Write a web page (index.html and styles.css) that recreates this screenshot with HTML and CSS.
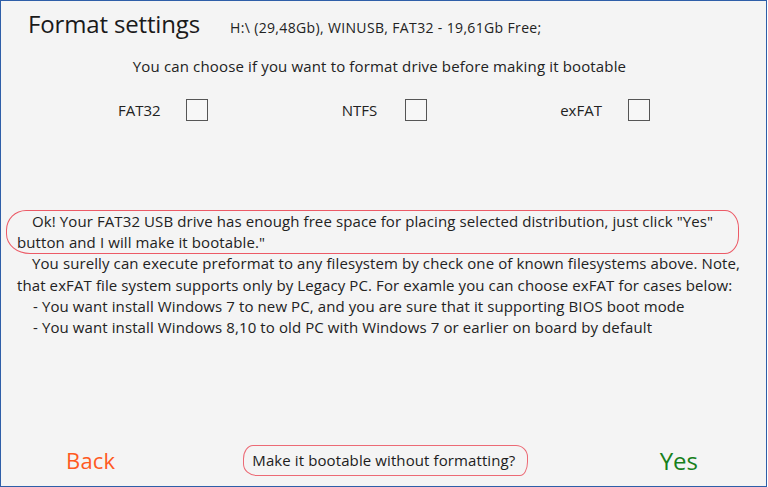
FILE: index.html
```html
<!DOCTYPE html>
<html>
<head>
<meta charset="utf-8">
<link rel="stylesheet" href="styles.css">
</head>
<body>
<div class="frame">
  <div class="header">
    <h1 class="title">Format settings</h1>
    <span class="drive">H:\ (29,48Gb), WINUSB, FAT32 - 19,61Gb Free;</span>
  </div>
  <p class="subtitle">You can choose if you want to format drive before making it bootable</p>
  <div class="fs-row">
    <div class="fs fs-fat32"><span class="fs-label">FAT32</span><span class="box"></span></div>
    <div class="fs fs-ntfs"><span class="fs-label">NTFS</span><span class="box"></span></div>
    <div class="fs fs-exfat"><span class="fs-label">exFAT</span><span class="box"></span></div>
  </div>
  <div class="notes">
    <p class="note note-ok">Ok! Your FAT32 USB drive has enough free space for placing selected distribution, just click "Yes" button and I will make it bootable."</p>
    <p class="note">You surelly can execute preformat to any filesystem by check one of known filesystems above. Note, that exFAT file system supports only by Legacy PC. For examle you can choose exFAT for cases below:</p>
    <p class="case">- You want install Windows 7 to new PC, and you are sure that it supporting BIOS boot mode</p>
    <p class="case">- You want install Windows 8,10 to old PC with Windows 7 or earlier on board by default</p>
  </div>
  <div class="footer">
    <span class="btn-back">Back</span>
    <span class="btn-noformat">Make it bootable without formatting?</span>
    <span class="btn-yes">Yes</span>
  </div>
</div>
</body>
</html>
```
FILE: styles.css
```css
html, body {
  margin: 0;
  padding: 0;
  background: #ffffff;
}
body {
  font-family: "Open Sans", "Noto Sans", sans-serif;
  color: #222222;
}
.frame {
  width: 767px;
  height: 487px;
  box-sizing: border-box;
  border: 1px solid #2e5ea8;
  background: #f4f4f4;
  display: flex;
  flex-direction: column;
}
.header {
  display: flex;
  align-items: baseline;
  padding: 6px 0 0 27px;
  height: 35px;
}
.title {
  margin: 0;
  font-weight: 400;
  font-size: 24px;
  color: #1a1a1a;
  letter-spacing: -0.15px;
}
.drive {
  margin-left: 30px;
  font-size: 14px;
  letter-spacing: 0.35px;
}
.subtitle {
  margin: 14px 0 0 0;
  text-align: center;
  font-size: 15px;
  letter-spacing: 0.15px;
  padding-right: 8px;
}
.fs-row {
  display: flex;
  margin-top: 22px;
  height: 24px;
  align-items: center;
}
.fs {
  display: flex;
  align-items: center;
}
.fs-label {
  font-size: 15px;
  letter-spacing: 0;
}
.box {
  width: 20px;
  height: 20px;
  border: 1px solid #555;
  background: #f7f7f7;
  margin-left: 25px;
}
.fs-fat32 { margin-left: 117px; }
.fs-ntfs { margin-left: 134px; }
.fs-ntfs .box { margin-left: 28px; }
.fs-exfat { margin-left: 133px; }
.fs-exfat .box { margin-left: 26px; }
.notes {
  margin-top: 89px;
  padding: 0 0 0 16px;
  width: 728px;
  font-size: 15px;
  line-height: 21.2px;
  letter-spacing: 0.1px;
}
.note, .case {
  margin: 0;
}
.note {
  text-indent: 15px;
}
.note-ok {
  position: relative;
  width: 712px;
}
.note-ok::before {
  content: "";
  position: absolute;
  left: -11px;
  right: -10px;
  top: -1px;
  bottom: -1px;
  border: 1px solid #ec5a66;
  border-radius: 20px 14px 14px 24px / 20px 18px 18px 20px;
  pointer-events: none;
}
.case {
  padding-left: 16px;
}
.footer {
  margin-top: auto;
  display: flex;
  align-items: center;
  height: 52px;
}
.btn-back {
  margin-left: 65px;
  font-size: 22px;
  letter-spacing: 0.2px;
  color: #ff5a1f;
}
.btn-noformat {
  margin-left: 128px;
  font-size: 15px;
  padding: 4px 12px 5px 8px;
  border: 1px solid #ec6a75;
  border-radius: 10px 12px 8px 14px / 14px 12px 14px 12px;
  letter-spacing: 0.1px;
  color: #1c1c1c;
}
.btn-yes {
  margin-left: auto;
  margin-right: 68px;
  font-size: 24px;
  color: #17801b;
}
```
